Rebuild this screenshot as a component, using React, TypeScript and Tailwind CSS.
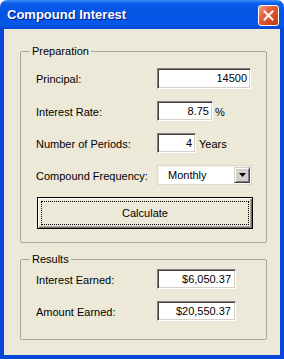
import type { ReactNode } from "react";

const TextBox = ({ className, value }: { className: string; value: string }) => (
  <div
    className={`flex items-center justify-end bg-white border border-t-[#808080] border-l-[#808080] border-b-white border-r-white shadow-[inset_1px_1px_0_#404040,inset_-1px_-1px_0_#d4d0c8] ${className}`}
  >
    {value}
  </div>
);

const Row = ({ label, children, className = "h-[20px]" }: { label: string; children: ReactNode; className?: string }) => (
  <div className={`flex items-center ${className}`}>
    <span className="w-[121px] shrink-0 pt-[2px]">{label}</span>
    {children}
  </div>
);

const GroupBox = ({ title, className, children }: { title: string; className: string; children: ReactNode }) => (
  <fieldset className={`border border-[#aca899] rounded-[2px] ${className}`}>
    <legend className="ml-[9px] px-[2px] leading-[13px]">{title}</legend>
    {children}
  </fieldset>
);

export default function App() {
  return (
    <div className="w-[284px] h-[359px] flex flex-col font-['Liberation_Sans',Arial,sans-serif] text-[11px] text-black select-none">
      {/* Title bar */}
      <div className="h-[29px] shrink-0 flex items-center justify-between pl-[7px] pr-[5px] rounded-t-[7px] bg-[linear-gradient(180deg,#3d8df6_0%,#0a5ce9_12%,#0554e4_45%,#0558e8_85%,#0346d2_100%)]">
        <span className="text-white font-bold text-[13px] mt-[1px] [text-shadow:1px_1px_0_#0a1a8a]">Compound Interest</span>
        <div className="w-[21px] h-[21px] mt-[2px] rounded-[3px] border border-white flex items-center justify-center bg-[linear-gradient(135deg,#f4a189_0%,#e4633d_35%,#d44a22_70%,#c23a14_100%)]">
          <svg width="11" height="11" viewBox="0 0 11 11">
            <path d="M1.5 1.5 L9.5 9.5 M9.5 1.5 L1.5 9.5" stroke="white" strokeWidth="2" strokeLinecap="square" />
          </svg>
        </div>
      </div>

      {/* Window body */}
      <div className="flex-1 flex flex-col bg-[#ece9d8] border-x-4 border-b-4 border-[#0847dc] pl-4 pr-[13px]">
        <GroupBox title="Preparation" className="mt-4">
          <div className="flex flex-col gap-3 pl-[15px] pr-[13px] pt-[10px] pb-[13px]">
            <Row label="Principal:" className="h-[21px]">
              <TextBox className="w-[94px] h-[21px] pr-[3px]" value="14500" />
            </Row>
            <Row label="Interest Rate:">
              <TextBox className="w-[56px] h-[20px] pr-[3px]" value="8.75" />
              <span className="ml-[2px] pt-[2px]">%</span>
            </Row>
            <Row label="Number of Periods:">
              <TextBox className="w-[39px] h-[20px] pr-[3px]" value="4" />
              <span className="ml-[3px] pt-[2px]">Years</span>
            </Row>
            <Row label="Compound Frequency:">
              <div className="w-[95px] h-[20px] flex items-center bg-white border border-[#dcdad0] shadow-[inset_1px_1px_0_#f3f2ec] pl-[10px] pr-[1px]">
                <span className="flex-1 pt-[1px]">Monthly</span>
                <div className="w-[16px] h-[16px] flex items-center justify-center bg-[#d4d0c8] border border-t-[#d4d0c8] border-l-[#d4d0c8] border-r-[#404040] border-b-[#404040] shadow-[inset_1px_1px_0_white,inset_-1px_-1px_0_#808080]">
                  <svg width="7" height="4" viewBox="0 0 7 4">
                    <polygon points="0,0 7,0 3.5,4" fill="black" />
                  </svg>
                </div>
              </div>
            </Row>
            <button className="ml-[1px] w-[216px] h-[32px] bg-[#ece9d8] border border-black shadow-[inset_1px_1px_0_white,inset_-1px_-1px_0_#716f64,inset_-2px_-2px_0_#aca899] outline-1 outline-dotted outline-black outline-offset-[-5px] text-[11px]">
              Calculate
            </button>
          </div>
        </GroupBox>

        <GroupBox title="Results" className="mt-[10px]">
          <div className="flex flex-col gap-3 pl-[15px] pr-[13px] pt-[3px] pb-[18px]">
            <Row label="Interest Earned:">
              <TextBox className="w-[79px] h-[20px] pr-[4px]" value="$6,050.37" />
            </Row>
            <Row label="Amount Earned:">
              <TextBox className="w-[79px] h-[20px] pr-[4px]" value="$20,550.37" />
            </Row>
          </div>
        </GroupBox>
      </div>
    </div>
  );
}
